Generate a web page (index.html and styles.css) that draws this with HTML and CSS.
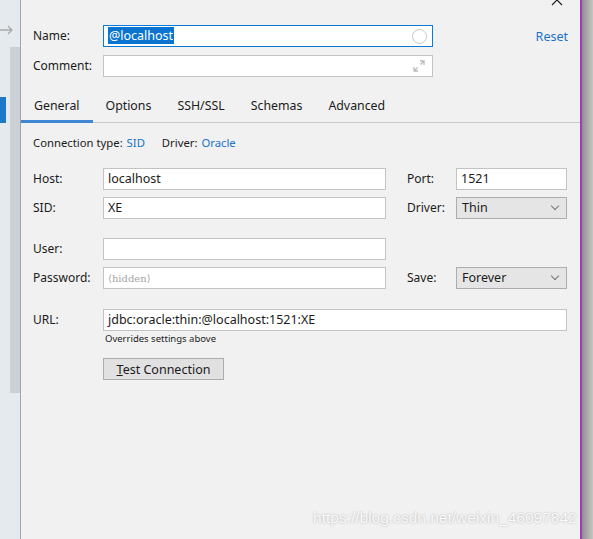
FILE: index.html
```html
<!DOCTYPE html>
<html lang="en">
<head>
  <meta charset="UTF-8">
  <title>Data Source</title>
  <link rel="stylesheet" href="styles.css">
</head>
<body>
  <div class="sidebar">
    <svg class="side-arrow" width="13" height="10" viewBox="0 0 13 10">
      <path d="M0 5 H12 M8 1 L12 5 L8 9" stroke="#a8a8a8" stroke-width="1.3" fill="none"/>
    </svg>
    <div class="side-scroll"></div>
    <div class="side-active"></div>
  </div>

  <div class="main">
    <svg class="close" width="12" height="12" viewBox="0 0 12 12">
      <path d="M1 1 L11 11 M11 1 L1 11" stroke="#222" stroke-width="1.2" fill="none"/>
    </svg>

    <div class="top">
      <label>Name:</label>
      <div class="field focus">
        <span class="sel">@localhost</span>
        <span class="ring"></span>
      </div>
      <a class="reset">Reset</a>

      <label>Comment:</label>
      <div class="field">
        <svg class="expand" width="12" height="12" viewBox="0 0 12 12">
          <path d="M7 1 H11 V5 M11 1 L7.5 4.5 M5 11 H1 V7 M1 11 L4.5 7.5" stroke="#bbb" stroke-width="1.3" fill="none"/>
        </svg>
      </div>
    </div>

    <div class="tabs">
      <div class="tab active">General</div>
      <div class="tab">Options</div>
      <div class="tab">SSH/SSL</div>
      <div class="tab">Schemas</div>
      <div class="tab">Advanced</div>
    </div>

    <div class="conn">
      Connection type: <span class="link">SID</span>
      <span class="gap">Driver:</span> <span class="link">Oracle</span>
    </div>

    <div class="form">
      <label>Host:</label>
      <div class="field">localhost</div>
      <label class="rl">Port:</label>
      <div class="field">1521</div>

      <label>SID:</label>
      <div class="field">XE</div>
      <label class="rl">Driver:</label>
      <div class="select">Thin <span class="chev"></span></div>
    </div>

    <div class="form block">
      <label>User:</label>
      <div class="field"></div>

      <label>Password:</label>
      <div class="field"><span class="hidden">&#x27E8;hidden&#x27E9;</span></div>
      <label class="rl">Save:</label>
      <div class="select">Forever <span class="chev"></span></div>
    </div>

    <div class="url">
      <label>URL:</label>
      <div class="field">jdbc:oracle:thin:@localhost:1521:XE</div>
    </div>
    <div class="hint">Overrides settings above</div>
    <button class="btn"><u>T</u>est Connection</button>
  </div>

  <div class="edge"></div>

  <div class="watermark">https://blog.csdn.net/weixin_46097842</div>
</body>
</html>
```

FILE: styles.css
```css
* { margin: 0; padding: 0; box-sizing: border-box; }
body {
  font-family: 'Noto Sans', 'Open Sans', sans-serif;
  font-size: 12px;
  color: #1b1b1b;
  width: 593px;
  height: 539px;
  overflow: hidden;
  display: flex;
  background: #f0f0f0;
  position: relative;
}
.sidebar {
  position: relative;
  width: 21px;
  background: #e5eaef;
  border-right: 1px solid #a3a3a3;
}
.side-arrow {
  position: absolute;
  top: 25px;
  left: 0;
}
.side-scroll {
  position: absolute;
  left: 10px;
  top: 47px;
  width: 10px;
  height: 346px;
  background: #cbd0d5;
}
.side-active {
  position: absolute;
  left: 0;
  top: 97px;
  width: 6px;
  height: 26px;
  background: #1d78c9;
}
.main {
  position: relative;
  width: 559px;
  background: #f1f1f1;
}
.close {
  position: absolute;
  left: 530px;
  top: -6px;
}
.top {
  display: grid;
  grid-template-columns: 70px 330px 1fr;
  row-gap: 8px;
  padding: 25px 12px 0 12px;
  align-items: center;
}
label { line-height: 22px; }
.field {
  position: relative;
  height: 22px;
  background: #fff;
  border: 1px solid #c3c3c3;
  padding: 0 4px;
  line-height: 20px;
  font-size: 12.5px;
  white-space: nowrap;
}
.field.focus { border-color: #0a7ad6; }
.sel {
  background: #0a74d0;
  color: #fff;
  padding: 0 1px;
}
.ring {
  position: absolute;
  right: 5px;
  top: 3px;
  width: 15px;
  height: 15px;
  border: 1px solid #c8c8c8;
  border-radius: 50%;
}
.expand {
  position: absolute;
  right: 7px;
  top: 4px;
}
.reset {
  justify-self: end;
  color: #1a73c9;
  font-size: 12.5px;
}
.tabs {
  display: flex;
  margin-top: 13px;
  border-bottom: 1px solid #c8c8c8;
}
.tab {
  position: relative;
  padding: 0 13px;
  height: 32px;
  line-height: 32px;
  font-size: 12.35px;
}
.tab.active::after {
  content: '';
  position: absolute;
  left: 0;
  right: 0;
  bottom: -1px;
  height: 3px;
  background: #3f87d2;
}
.conn {
  padding: 12px 12px 0;
  line-height: 16px;
  font-size: 11.3px;
}
.conn .gap { margin-left: 14px; }
.link { color: #1a73c9; margin-left: 1px; }
.form {
  display: grid;
  grid-template-columns: 70px 283px 21px 49px 111px;
  row-gap: 7px;
  padding: 0 12px;
  margin-top: 17px;
}
.form label { grid-column: 1; }
.form .rl { grid-column: 4; }
.form.block { margin-top: 19px; }
.select {
  position: relative;
  height: 22px;
  background: #e5e5e5;
  border: 1px solid #adadad;
  padding: 0 5px;
  line-height: 20px;
  font-size: 12.5px;
}
.chev {
  position: absolute;
  right: 8px;
  top: 5px;
  width: 6px;
  height: 6px;
  border-right: 1px solid #777;
  border-bottom: 1px solid #777;
  transform: rotate(45deg);
}
.hidden {
  font-family: 'DejaVu Serif', 'Liberation Serif', serif;
  font-size: 10px;
  color: #a5a5a5;
}
.url {
  display: grid;
  grid-template-columns: 70px 464px;
  padding: 0 12px;
  margin-top: 20px;
}
.hint {
  margin: 2px 0 0 84px;
  font-size: 9.5px;
  line-height: 12px;
}
.btn {
  margin: 13px 0 0 82px;
  width: 121px;
  height: 22px;
  background: #e1e1e1;
  border: 1px solid #adadad;
  font-family: inherit;
  font-size: 12.5px;
  color: #1b1b1b;
}
.btn u { text-decoration: underline; }
.edge {
  width: 13px;
  border-left: 2px solid #a238c2;
  background: linear-gradient(to right, #8f8f8f, #c6c6c6);
}
.watermark {
  position: absolute;
  left: 313px;
  top: 509px;
  font-family: 'Liberation Sans', Arial, sans-serif;
  font-size: 15.5px;
  color: #fafafa;
  text-shadow: 0 0 2px rgba(0, 0, 0, 0.3);
  white-space: nowrap;
}
```
